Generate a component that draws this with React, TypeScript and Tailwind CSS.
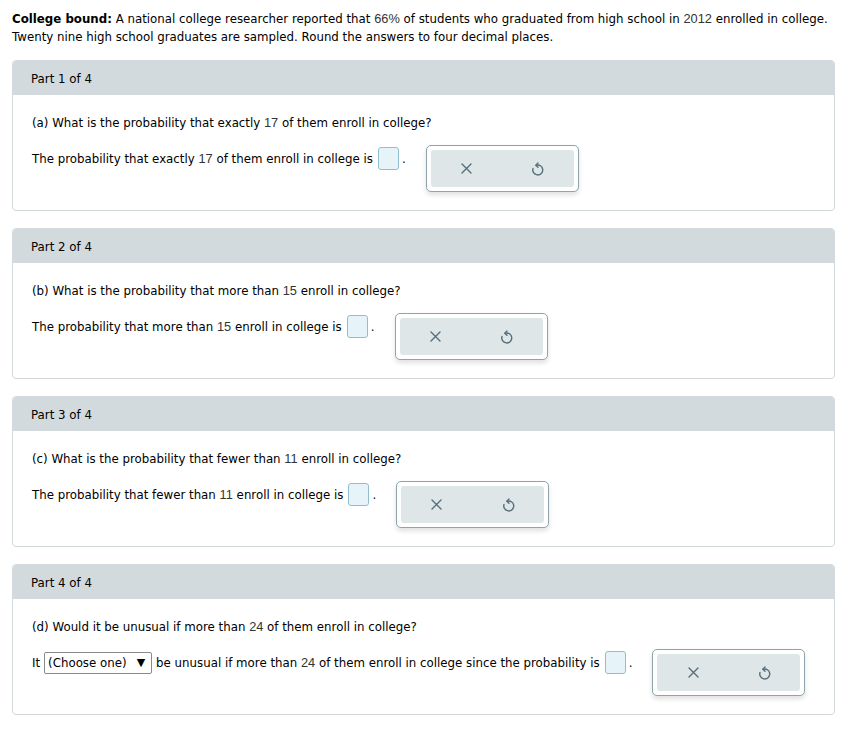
import type { ReactNode } from "react";

const num = "font-['Liberation_Sans',sans-serif] text-[12.8px] leading-[18px] text-[#333]";

function N({ children }: { children: ReactNode }) {
  return <span className={num}>{children}</span>;
}

function AnswerBox() {
  return (
    <span className="ml-[5px] mr-[3px] inline-block h-[23px] w-[21px] rounded-[3px] border border-[#8fbfcf] bg-[#e6f4f9]" />
  );
}

function XIcon() {
  return (
    <svg width="11" height="11" viewBox="0 0 11 11" fill="none">
      <path d="M1 1L10 10M10 1L1 10" stroke="#546e7a" strokeWidth="1.4" strokeLinecap="round" />
    </svg>
  );
}

function UndoIcon() {
  return (
    <svg width="13" height="14" viewBox="0 0 13 14" fill="none">
      <path
        d="M5.2 3.2A5 5 0 1 1 2 6.4"
        stroke="#546e7a"
        strokeWidth="1.4"
        strokeLinecap="round"
      />
      <path d="M7 1L4.8 3.2L7 5.2" stroke="#546e7a" strokeWidth="1.4" strokeLinecap="round" strokeLinejoin="round" />
    </svg>
  );
}

function Tools() {
  return (
    <div className="ml-[20px] h-[47px] w-[153px] shrink-0 rounded-[5px] border border-[#8fa3aa] bg-white p-[4px] shadow-[0_3px_5px_rgba(0,0,0,0.12)]">
      <div className="flex h-full rounded-[3px] bg-[#dfe6e8]">
        <button type="button" className="flex flex-1 items-center justify-center">
          <XIcon />
        </button>
        <button type="button" className="flex flex-1 items-center justify-center">
          <UndoIcon />
        </button>
      </div>
    </div>
  );
}

function Card({
  part,
  question,
  answer,
}: {
  part: number;
  question: ReactNode;
  answer: ReactNode;
}) {
  return (
    <div className="rounded-[4px] border border-[#d3d9db] bg-white">
      <div className="flex h-[34px] items-center rounded-t-[3px] bg-[#d3dadd] pl-[18px] pt-[1px]">
        Part {part} of 4
      </div>
      <div className="px-[19px] pb-[18px] pt-[19px]">
        <div className="h-[18px] leading-[18px]">{question}</div>
        <div className="mt-[13px] flex items-start">
          <div className="mt-[2px] flex h-[23px] items-center whitespace-pre">
            {answer}
            <span>.</span>
          </div>
          <Tools />
        </div>
      </div>
    </div>
  );
}

export default function App() {
  return (
    <div className="min-h-screen bg-white pl-[12px] pr-[18px] pt-[10px] font-['DejaVu_Sans',Verdana,sans-serif] text-[11.8px] leading-[18px] text-black">
      <p>
        <b>College bound:</b> A national college researcher reported that <N>66%</N> of students who
        graduated from high school in <N>2012</N> enrolled in college. Twenty nine high school graduates
        are sampled. Round the answers to four decimal places.
      </p>
      <div className="mt-[14px] flex flex-col gap-[17px]">
        <Card
          part={1}
          question={
            <>
              (a) What is the probability that exactly <N>17</N> of them enroll in college?
            </>
          }
          answer={
            <>
              The probability that exactly <N>17</N> of them enroll in college is
              <AnswerBox />
            </>
          }
        />
        <Card
          part={2}
          question={
            <>
              (b) What is the probability that more than <N>15</N> enroll in college?
            </>
          }
          answer={
            <>
              The probability that more than <N>15</N> enroll in college is
              <AnswerBox />
            </>
          }
        />
        <Card
          part={3}
          question={
            <>
              (c) What is the probability that fewer than <N>11</N> enroll in college?
            </>
          }
          answer={
            <>
              The probability that fewer than <N>11</N> enroll in college is
              <AnswerBox />
            </>
          }
        />
        <Card
          part={4}
          question={
            <>
              (d) Would it be unusual if more than <N>24</N> of them enroll in college?
            </>
          }
          answer={
            <>
              It
              <span className="ml-[4px] mr-[4px] flex h-[22px] w-[108px] items-center justify-between rounded-[2px] border border-[#8a8a8a] pl-[3px] pr-[6px]">
                <span>(Choose one)</span>
                <span className="text-[11px]">▼</span>
              </span>
              be unusual if more than <N>24</N> of them enroll in college since the probability is
              <AnswerBox />
            </>
          }
        />
      </div>
    </div>
  );
}
